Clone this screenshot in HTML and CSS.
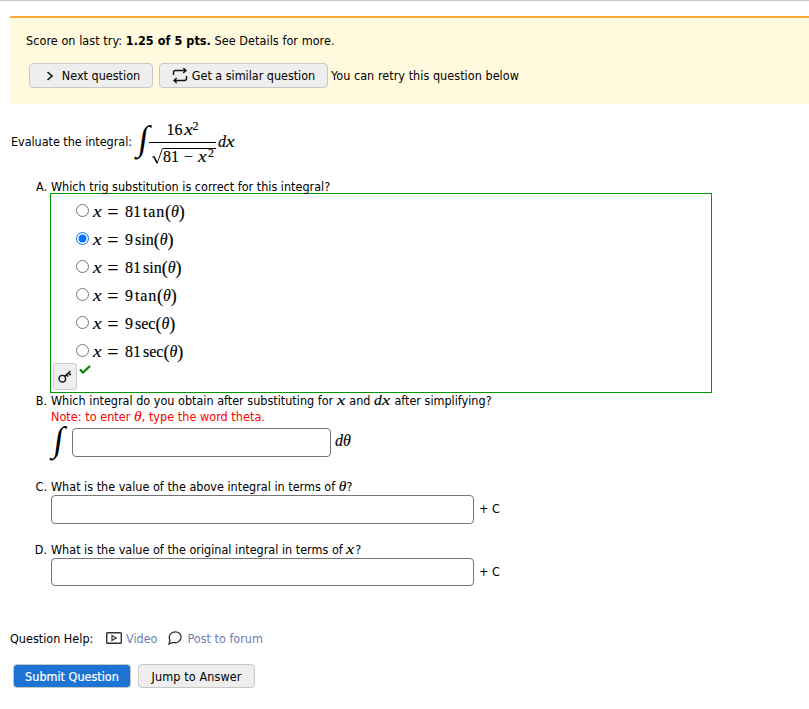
FILE: index.html
```
<!DOCTYPE html>
<html lang="en">
<head>
<meta charset="utf-8">
<title>Question</title>
<link rel="stylesheet" href="styles.css">
</head>
<body>
<section class="notice">
  <p class="score"><span>Score on last try: </span><b>1.25 of 5 pts.</b><span> See Details for more.</span></p>
  <div class="actions">
    <button class="btn next"><svg width="8" height="10" viewBox="0 0 8 10"><path d="M1.5 1 6 5 1.5 9" fill="none" stroke="#111" stroke-width="1.6"/></svg>Next question</button>
    <button class="btn similar"><svg width="16" height="16" viewBox="0 0 16 16" fill="none" stroke="#111" stroke-width="1.4"><path d="M1.5 7V4.5Q1.5 2.5 3.5 2.5H14M11.3 0l2.7 2.5L11.3 5M14.5 8v2.5q0 2-2 2H2M4.7 10l-2.7 2.5L4.7 15"/></svg>Get a similar question</button>
    <span class="retry">You can retry this question below</span>
  </div>
</section>
<main>
  <div class="prompt">
    <span class="lead">Evaluate the integral:</span>
    <span class="int int-a">∫</span>
    <span class="frac">
      <span class="num m">16<i class="v">x</i><sup>2</sup></span>
      <span class="den"><svg width="12" height="18" viewBox="0 0 12 18" fill="none" stroke="#000"><path d="M1 10.5 3 9.3" stroke-width=".8"/><path d="M3 9.5 6 16" stroke-width="1.6"/><path d="M6 16.5 11.5 1.5" stroke-width=".9"/></svg><span class="rad m">81<span class="minus">−</span><i class="v">x</i><sup>2</sup></span></span>
    </span>
    <span class="m dx"><i>d</i><i class="v">x</i></span>
  </div>
  <div class="q qa"><span class="letter">A.</span><span>Which trig substitution is correct for this integral?</span></div>
  <div class="choices">
    <label><input type="radio" name="a"><i class="v">x</i><span class="eq">=</span><span>81</span><span class="fn tan">tan</span><span class="arg">(<i>θ</i>)</span></label>
    <label><input type="radio" name="a" checked><i class="v">x</i><span class="eq">=</span><span>9</span><span class="fn">sin</span><span class="arg">(<i>θ</i>)</span></label>
    <label><input type="radio" name="a"><i class="v">x</i><span class="eq">=</span><span>81</span><span class="fn">sin</span><span class="arg">(<i>θ</i>)</span></label>
    <label><input type="radio" name="a"><i class="v">x</i><span class="eq">=</span><span>9</span><span class="fn tan">tan</span><span class="arg">(<i>θ</i>)</span></label>
    <label><input type="radio" name="a"><i class="v">x</i><span class="eq">=</span><span>9</span><span class="fn">sec</span><span class="arg">(<i>θ</i>)</span></label>
    <label><input type="radio" name="a"><i class="v">x</i><span class="eq">=</span><span>81</span><span class="fn">sec</span><span class="arg">(<i>θ</i>)</span></label>
    <div class="result">
      <button class="key"><svg width="14" height="14" viewBox="0 0 14 14" fill="none" stroke="#111" stroke-width="1.4"><circle cx="4.3" cy="8.7" r="3.3"/><path d="M6.7 6.3 12.5 1M8.5 4.7l1.7 1.8M10.3 3l1.7 1.8 1-1"/></svg></button>
      <svg class="tick" width="12" height="9" viewBox="0 0 12 9"><path d="M1 4.5 4 7.5 11 1" fill="none" stroke="#0a800a" stroke-width="2.2"/></svg>
    </div>
  </div>
  <div class="q"><span class="letter">B.</span><span>Which integral do you obtain after substituting for <i class="v">x</i> and <i>d</i><i class="v">x</i> after simplifying?</span></div>
  <div class="note">Note: to enter <i>θ</i>, type the word theta.</div>
  <div class="row-b"><span class="int int-b">∫</span><input class="box short" type="text"><span class="m dth"><i>dθ</i></span></div>
  <div class="q qc"><span class="letter">C.</span><span>What is the value of the above integral in terms of <i>θ</i>?</span></div>
  <div class="row"><input class="box" type="text"><span>+ C</span></div>
  <div class="q qd"><span class="letter">D.</span><span>What is the value of the original integral in terms of <i class="v">x</i>?</span></div>
  <div class="row"><input class="box last" type="text"><span>+ C</span></div>
  <div class="help"><span class="help-label">Question Help:</span>
    <svg class="video" width="16" height="12" viewBox="0 0 16 12" fill="none" stroke="#333" stroke-width="1.4"><rect x=".7" y=".7" width="14.6" height="10.6" rx=".8"/><path d="M6 3.5v5L10.2 6z" stroke-width="1.2"/></svg><a>Video</a>
    <svg class="forum" width="14" height="14" viewBox="0 0 14 14" fill="none" stroke="#333" stroke-width="1.3"><path d="M1 13 2 9.5C-.2 5 3 .8 7.3.8c3.3 0 5.8 2.3 5.8 5.3 0 4-4.2 6.5-8.3 5.3z"/></svg><a>Post to forum</a>
  </div>
  <div class="buttons"><button class="btn submit">Submit Question</button><button class="btn jump">Jump to Answer</button></div>
</main>
</body>
</html>
```
FILE: styles.css
```
* { box-sizing: border-box; }
body { margin: 0; height: 709px; overflow: hidden; border-top: 1px solid #c8c8c8; background: #fff; color: #000; font: 12.5px/16px "DejaVu Sans Condensed", "DejaVu Sans", sans-serif; font-stretch: condensed; white-space: nowrap; }
i, .m, .choices label { font-family: "Liberation Serif", serif; font-size: 16px; -webkit-text-stroke: .15px currentColor; }
i { line-height: 12px; }
.q i, .note i { font-size: 15.5px; }
.v { display: inline-block; width: 9px; transform: scaleX(1.2); transform-origin: 0 50%; }
svg { flex: none; }
.notice { margin: 15px 0 0 10px; height: 88px; border-top: 2px solid #ffa834; background: #fff9dd; padding: 15px 16px; }
.score { margin: 0; white-space: pre; display: flex; letter-spacing: .06px; }
.actions { display: flex; align-items: center; margin: 14px 0 0 3px; }
.btn { display: flex; align-items: center; justify-content: center; height: 25px; padding: 1px 0 0; border: 1px solid #c8c8c8; border-radius: 4px; background: #eee; color: #000; font: inherit; white-space: nowrap; }
.next { width: 124px; gap: 8px; margin-right: 6px; padding-left: 4px; }
.similar { width: 169px; gap: 4px; margin-right: 3px; letter-spacing: -.03px; }
.retry { padding-top: 1px; letter-spacing: .04px; }
main { padding-left: 11px; }
.prompt { display: flex; height: 56px; margin-top: 12px; }
.lead { width: 125px; padding-top: 18px; letter-spacing: -.04px; }
.int { font-family: "Liberation Serif", serif; font-size: 35px; transform: skewX(-8deg); }
.int-a { width: 13px; line-height: 46px; padding-left: 2px; }
.frac { width: 67px; }
.num { display: block; height: 27px; border-bottom: 1px solid #000; line-height: 28px; text-align: center; }
sup { font-size: 12px; line-height: 0; vertical-align: 5px; margin-left: 1px; }
.den { display: flex; padding: 4px 0 0 2px; }
.rad { border-top: 1px solid #000; height: 18px; line-height: 16px; width: 53px; margin-top: 1px; }
.minus { margin: 0 5px; }
.dx { padding: 18px 0 0 2px; }
.q { display: flex; height: 16px; }
.letter { width: 40px; padding-right: 4px; text-align: right; flex: none; }
.qa { margin-top: 7px; }
.choices { width: 662px; height: 200px; margin-left: 39px; margin-top: -2px; border: 1px solid #090; padding: 4px 0 0 25px; }
.choices label { display: flex; align-items: center; height: 28px; line-height: 28px; }
.choices input { width: 13px; height: 13px; margin: 0 4px 3px 0; }
.choices i { line-height: 28px; }
.eq { width: 14px; margin: 0 5px 0 4px; text-align: center; font-size: 20px; -webkit-text-stroke: 0; }
.fn { margin-left: 2px; }
.tan { letter-spacing: .8px; }
.arg { display: flex; font-size: 18px; }
.result { display: flex; margin: -3px 0 0 -23px; height: 27px; }
.key { width: 24px; height: 27px; display: flex; align-items: center; justify-content: center; padding: 0; border: 1px solid #ccc; border-radius: 3px; background: #eee; }
.tick { margin: 2px 0 0 2px; }
.note { margin-left: 40px; height: 16px; color: #f00; letter-spacing: .04px; }
.row-b { display: flex; height: 41px; margin-left: 40px; padding-top: 3px; }
.int-b { width: 21px; line-height: 23px; padding-left: 2px; }
.box { width: 423px; height: 29px; margin: 0 5px 0 0; border: 1px solid #767676; border-radius: 4px; padding: 0; background: #fff; }
.short { width: 259px; }
.last { height: 28px; }
.dth { padding-top: 5px; margin-left: -1px; }
.qc { margin-top: 13px; }
.row { display: flex; align-items: flex-start; height: 29px; margin-left: 40px; }
.row span { padding-top: 6px; }
.qd { margin-top: 18px; }
.help { display: flex; align-items: center; margin: 44px 0 0 -1px; height: 16px; }
.help-label { width: 96px; }
.help a { color: #6b80b8; }
.video { margin-right: 4px; margin-bottom: 2px; }
.forum { margin: 0 5px 2px 11px; }
.buttons { display: flex; gap: 7px; margin: 17px 0 0 2px; }
.buttons .btn { height: 24px; }
.submit { width: 118px; background: #1d73d3; color: #fff; -webkit-text-stroke: .2px #fff; }
.jump { width: 117px; letter-spacing: .12px; }
```
